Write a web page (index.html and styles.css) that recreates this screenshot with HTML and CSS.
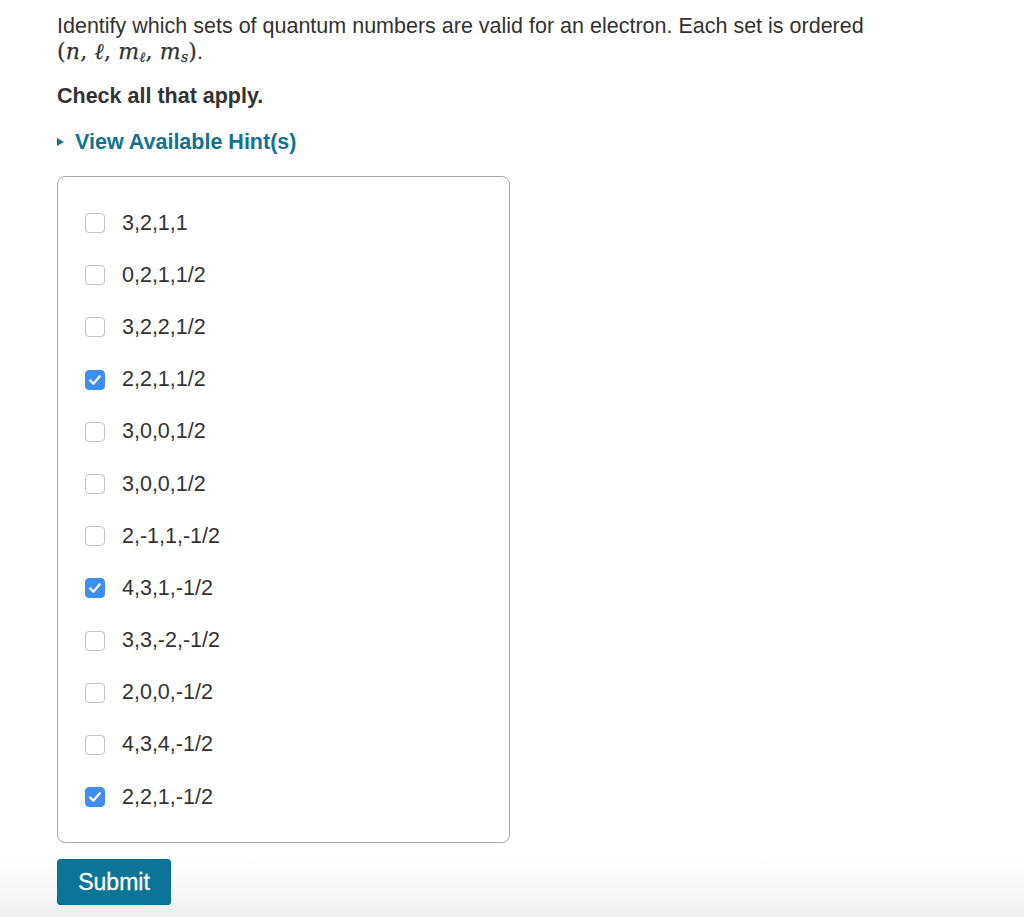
FILE: index.html
```html
<!DOCTYPE html>
<html>
<head>
<meta charset="utf-8">
<link rel="stylesheet" href="styles.css">
</head>
<body>
<div class="page">
  <p class="prompt">Identify which sets of quantum numbers are valid for an electron. Each set is ordered<br><span class="math">(<i>n</i>, <i>ℓ</i>, <i>m</i><sub><i>ℓ</i></sub>, <i>m</i><sub><i>s</i></sub>)</span>.</p>
  <p class="instr">Check all that apply.</p>
  <div class="hint"><span class="tri"></span>View Available Hint(s)</div>
  <div class="box">
    <div class="row"><span class="cb"></span><span class="lbl">3,2,1,1</span></div>
    <div class="row"><span class="cb"></span><span class="lbl">0,2,1,1/2</span></div>
    <div class="row"><span class="cb"></span><span class="lbl">3,2,2,1/2</span></div>
    <div class="row"><span class="cb on"><svg viewBox="0 0 20 20" width="20" height="20"><path d="M5 10.4 L8.4 13.8 L14.8 6.2" fill="none" stroke="#fff" stroke-width="2.2" stroke-linecap="round" stroke-linejoin="round"/></svg></span><span class="lbl">2,2,1,1/2</span></div>
    <div class="row"><span class="cb"></span><span class="lbl">3,0,0,1/2</span></div>
    <div class="row"><span class="cb"></span><span class="lbl">3,0,0,1/2</span></div>
    <div class="row"><span class="cb"></span><span class="lbl">2,-1,1,-1/2</span></div>
    <div class="row"><span class="cb on"><svg viewBox="0 0 20 20" width="20" height="20"><path d="M5 10.4 L8.4 13.8 L14.8 6.2" fill="none" stroke="#fff" stroke-width="2.2" stroke-linecap="round" stroke-linejoin="round"/></svg></span><span class="lbl">4,3,1,-1/2</span></div>
    <div class="row"><span class="cb"></span><span class="lbl">3,3,-2,-1/2</span></div>
    <div class="row"><span class="cb"></span><span class="lbl">2,0,0,-1/2</span></div>
    <div class="row"><span class="cb"></span><span class="lbl">4,3,4,-1/2</span></div>
    <div class="row"><span class="cb on"><svg viewBox="0 0 20 20" width="20" height="20"><path d="M5 10.4 L8.4 13.8 L14.8 6.2" fill="none" stroke="#fff" stroke-width="2.2" stroke-linecap="round" stroke-linejoin="round"/></svg></span><span class="lbl">2,2,1,-1/2</span></div>
  </div>
  <div class="actions"><button class="submit">Submit</button></div>
</div>
</body>
</html>
```
FILE: styles.css
```css
html, body {
  margin: 0;
  padding: 0;
}
body {
  width: 1024px;
  height: 917px;
  overflow: hidden;
  background: linear-gradient(to bottom, #ffffff 0, #ffffff 858px, #f9f9f9 885px, #eeeeee 917px);
  font-family: "Liberation Sans", Arial, sans-serif;
  color: #333;
}
.page {
  padding: 13px 0 0 57px;
}
.prompt {
  margin: 0;
  font-size: 21.5px;
  line-height: 26px;
}
.math {
  font-family: "DejaVu Serif", "Liberation Serif", serif;
  font-size: 22px;
  letter-spacing: 0.2px;
  -webkit-text-stroke: 0.25px #333;
}
.math i {
  font-style: italic;
}
.math sub {
  font-size: 14px;
  vertical-align: -3px;
  line-height: 0;
}
.instr {
  margin: 18px 0 0 0;
  font-size: 21.5px;
  font-weight: bold;
  line-height: 26px;
}
.hint {
  margin-top: 20px;
  display: flex;
  align-items: center;
  color: #0e7393;
  font-weight: bold;
  font-size: 21.5px;
  line-height: 26px;
}
.tri {
  width: 0;
  height: 0;
  border-left: 7px solid #0e7393;
  border-top: 4.5px solid transparent;
  border-bottom: 4.5px solid transparent;
  margin: 0 11px 0 0;
}
.box {
  margin-top: 21px;
  width: 453px;
  height: 667px;
  box-sizing: border-box;
  border: 1px solid #aaa;
  border-radius: 8px;
  padding: 20px 0 0 27px;
  display: flex;
  flex-direction: column;
}
.row {
  height: 52.2px;
  flex: none;
  display: flex;
  align-items: center;
}
.cb {
  width: 20px;
  height: 20px;
  box-sizing: border-box;
  border: 1px solid #c2c2c2;
  border-radius: 4px;
  background: #fff;
  margin-right: 17px;
  display: flex;
  align-items: center;
  justify-content: center;
  flex: none;
}
.cb.on {
  background: #3d8ef2;
  border-color: #3d8ef2;
}
.cb svg {
  display: block;
  flex: none;
}
.lbl {
  font-size: 21.5px;
  color: #333;
}
.actions {
  margin-top: 16px;
}
.submit {
  width: 114px;
  height: 46px;
  background: #0b7597;
  color: #fff;
  border: 1px solid #0a6f90;
  border-radius: 3px;
  font-family: "Liberation Sans", Arial, sans-serif;
  font-size: 23px;
  -webkit-text-stroke: 0.3px #fff;
  padding: 0;
}
```
